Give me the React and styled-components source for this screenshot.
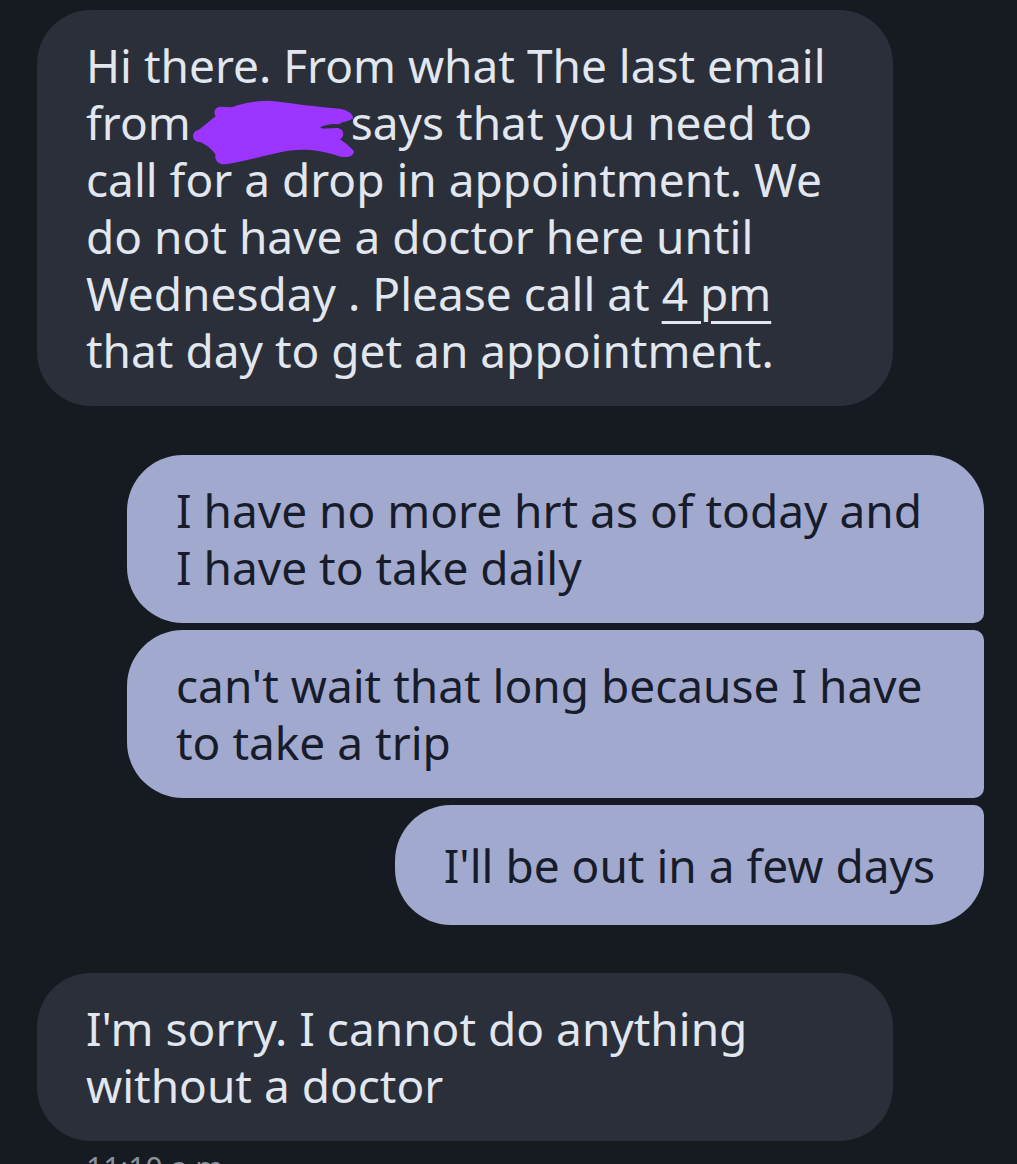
import React from "react";
import styled, { createGlobalStyle } from "styled-components";

const GlobalStyle = createGlobalStyle`
  html, body {
    margin: 0;
    padding: 0;
    background: #161b22;
  }
  body {
    font-family: "Noto Sans", "Open Sans", sans-serif;
  }
`;

const Page = styled.div`
  display: flex;
  flex-direction: column;
  padding: 10px 33px 0 37px;
  height: 1164px;
  box-sizing: border-box;
  overflow: hidden;
  background: #161b22;
`;

const Bubble = styled.div`
  box-sizing: border-box;
  flex-shrink: 0;
  font-size: 46px;
  line-height: 57px;
  padding: 27px 49px;
  min-height: 120px;
  display: flex;
  flex-direction: column;
  justify-content: center;
`;

const Incoming = styled(Bubble)`
  align-self: flex-start;
  width: 856px;
  background: #2a2f39;
  color: #e1e6ef;
  border-radius: 54px;
  margin-top: ${(p) => p.$gap || 0}px;
`;

const Outgoing = styled(Bubble)`
  align-self: flex-end;
  width: ${(p) => (p.$full ? "857px" : "auto")};
  background: #a2a9cf;
  color: #171c2a;
  margin-top: ${(p) => p.$gap || 0}px;
  border-radius: ${(p) =>
    p.$pos === "first"
      ? "56px 56px 10px 56px"
      : p.$pos === "middle"
      ? "56px 10px 10px 56px"
      : "56px 10px 56px 56px"};
`;

const Line = styled.span`
  display: block;
  white-space: nowrap;
`;

const Link = styled.span`
  text-decoration: underline;
  text-decoration-thickness: 3px;
  text-underline-offset: 10px;
`;

const Redact = styled.span`
  display: inline-block;
  position: relative;
  width: 160px;
  height: 1px;
  vertical-align: baseline;
  svg {
    position: absolute;
    left: 0;
    bottom: -28px;
    overflow: visible;
  }
`;

const Time = styled.div`
  flex-shrink: 0;
  margin: 6px 0 0 49px;
  font-size: 30px;
  color: #8b919c;
`;

const Scribble = () => (
  <svg width="166" height="70" viewBox="0 0 170 70">
    <path
      d="M3,36 C10,30 20,22 30,14 C45,6 62,2 80,2 C100,4 125,8 150,10 C160,11 166,15 166,20 C160,25 142,25 132,29 C146,36 160,45 167,54 C166,61 156,61 146,57 C131,52 116,51 100,53 C80,57 55,64 36,67 C28,68 24,63 25,57 C21,51 14,45 3,42 Z"
      fill="#9b35ff"
    />
    <path
      d="M8,38 L40,30 M30,14 L150,20 M60,40 L150,36 M40,56 L120,44"
      stroke="#9b35ff"
      strokeWidth="12"
      strokeLinecap="round"
      fill="none"
    />
  </svg>
);

export default function App() {
  return (
    <>
      <GlobalStyle />
      <Page>
        <Incoming>
          <Line>Hi there. From what The last email</Line>
          <Line>
            from
            <Redact>
              <Scribble />
            </Redact>
            says that you need to
          </Line>
          <Line>call for a drop in appointment. We</Line>
          <Line>do not have a doctor here until</Line>
          <Line>
            Wednesday . Please call at <Link>4 pm</Link>
          </Line>
          <Line>that day to get an appointment.</Line>
        </Incoming>

        <Outgoing $pos="first" $full $gap={49}>
          <Line>I have no more hrt as of today and</Line>
          <Line>I have to take daily</Line>
        </Outgoing>
        <Outgoing $pos="middle" $full $gap={7}>
          <Line>can't wait that long because I have</Line>
          <Line>to take a trip</Line>
        </Outgoing>
        <Outgoing $pos="last" $gap={7}>
          <Line>I'll be out in a few days</Line>
        </Outgoing>

        <Incoming $gap={48}>
          <Line>I'm sorry. I cannot do anything</Line>
          <Line>without a doctor</Line>
        </Incoming>
        <Time>11:10 a.m.</Time>
      </Page>
    </>
  );
}
